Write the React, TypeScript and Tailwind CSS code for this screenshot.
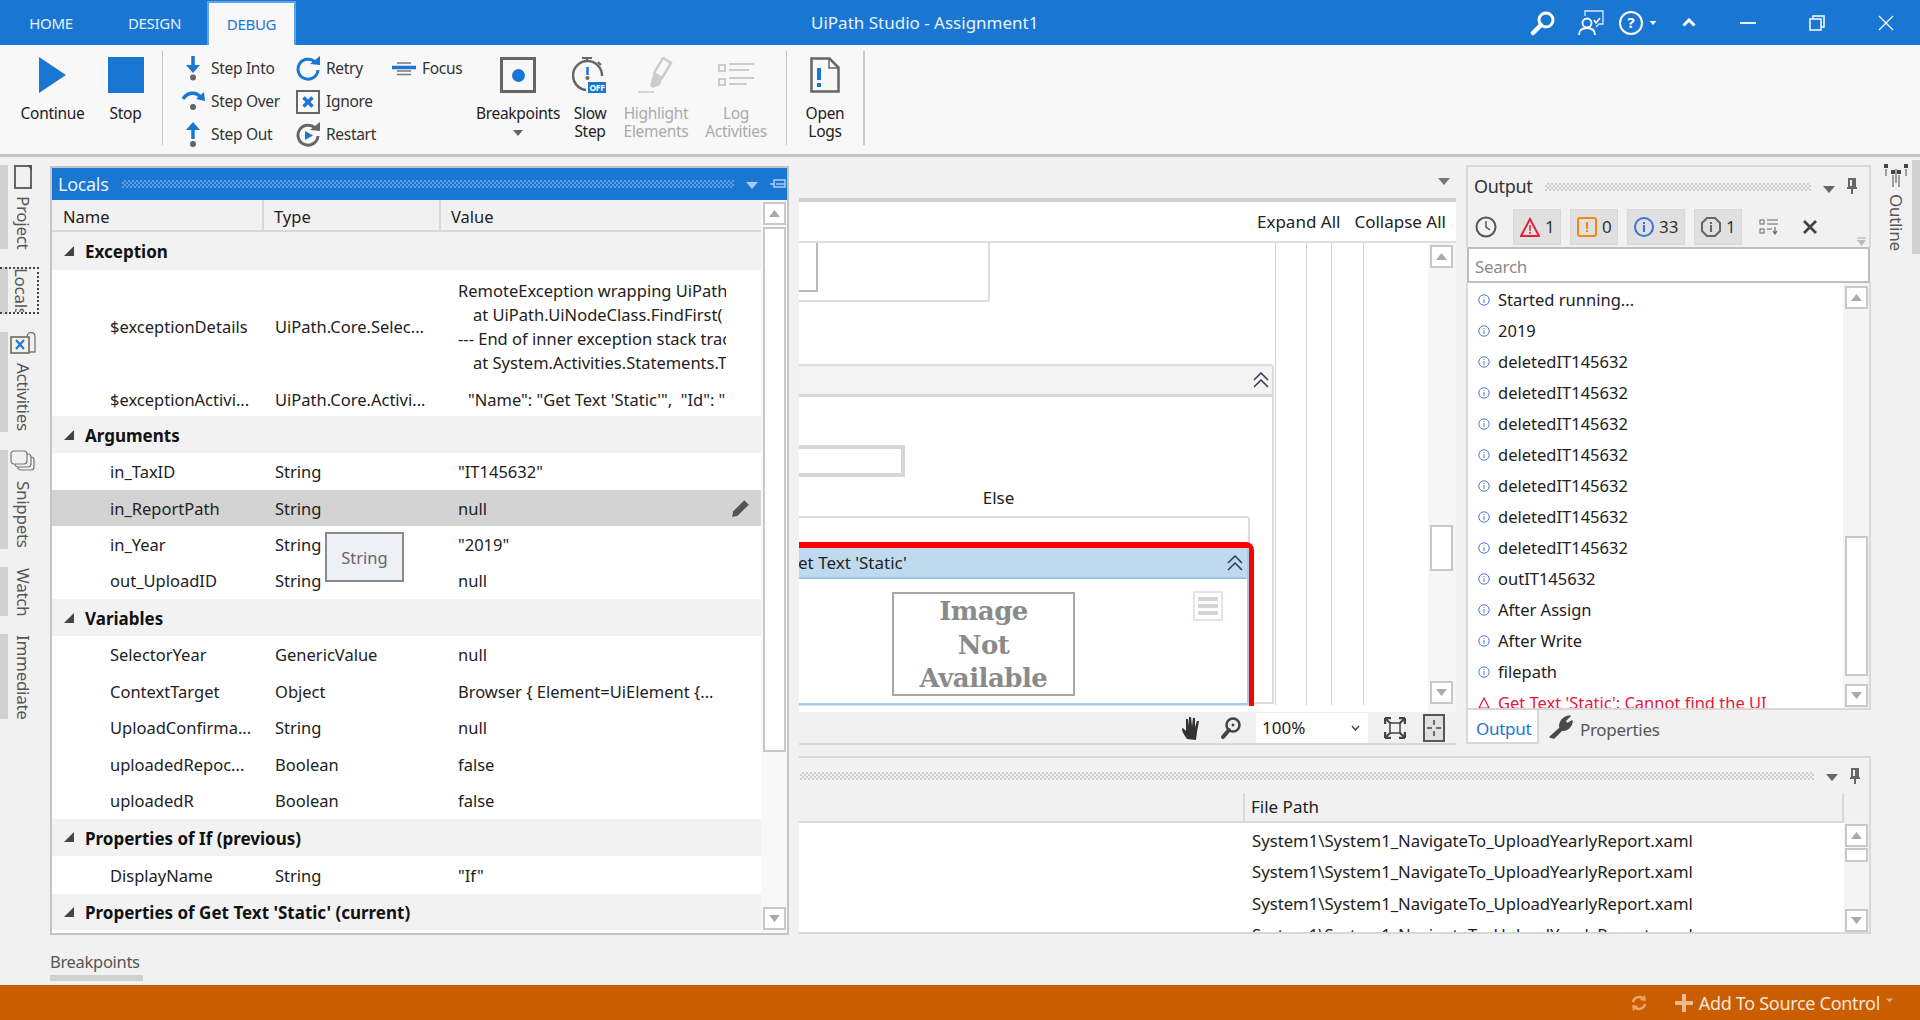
import React from "react";

const Dots = ({ className = "" }: { className?: string }) => (
  <div className={"h-[8px] bg-[repeating-conic-gradient(#cfcfcf_0_25%,transparent_0_50%)] bg-[length:4px_4px] " + className} />
);
const DotsBlue = ({ className = "" }: { className?: string }) => (
  <div className={"h-[8px] bg-[repeating-conic-gradient(#5c9fe0_0_25%,transparent_0_50%)] bg-[length:4px_4px] " + className} />
);
const Caret = ({ c = "#666", w = 12, h = 7 }: { c?: string; w?: number; h?: number }) => (
  <svg width={w} height={h} viewBox="0 0 12 7"><polygon points="0,0 12,0 6,7" fill={c} /></svg>
);
const Pin = ({ c = "#666" }: { c?: string }) => (
  <svg width="12" height="16" viewBox="0 0 12 16"><path d="M3 1h6v8H3z" fill="none" stroke={c} strokeWidth="2" /><path d="M1 10h10M6 10v6M7 2v7" stroke={c} strokeWidth="2" /></svg>
);
const ScrollBtn = ({ up, className = "" }: { up?: boolean; className?: string }) => (
  <div className={"w-[23px] h-[23px] border-2 border-[#c8c8c8] bg-white flex items-center justify-center shrink-0 " + className}>
    <svg width="11" height="7" viewBox="0 0 11 7"><polygon points={up ? "0,7 11,7 5.5,0" : "0,0 11,0 5.5,7"} fill="#aaa" /></svg>
  </div>
);

const StepInto = () => (
  <svg width="24" height="25" viewBox="0 0 24 25"><path d="M12 0v11" stroke="#1976d2" strokeWidth="3.5" /><polygon points="5,9 19,9 12,17" fill="#1976d2" /><circle cx="12" cy="21.5" r="3" fill="#666" /></svg>
);
const StepOver = () => (
  <svg width="24" height="25" viewBox="0 0 24 25"><path d="M2 10C6 3 16 2 20 9" fill="none" stroke="#1976d2" strokeWidth="3.5" /><polygon points="15,10 24,12 23,3" fill="#1976d2" /><circle cx="12" cy="18" r="3" fill="#666" /></svg>
);
const StepOut = () => (
  <svg width="24" height="25" viewBox="0 0 24 25"><path d="M12 6v11" stroke="#1976d2" strokeWidth="3.5" /><polygon points="5,8 19,8 12,0" fill="#1976d2" /><circle cx="12" cy="22" r="3" fill="#666" /></svg>
);
const Retry = () => (
  <svg width="24" height="25" viewBox="0 0 24 25"><path d="M19 6A10 10 0 1 0 22 14" fill="none" stroke="#1976d2" strokeWidth="3" /><polygon points="14,8 24,9 24,0" fill="#1976d2" /></svg>
);
const Ignore = () => (
  <svg width="24" height="24" viewBox="0 0 24 24"><rect x="1" y="1" width="22" height="22" fill="none" stroke="#666" strokeWidth="2" /><path d="M7.5 7.5l9 9M16.500 7.500l-9 9" stroke="#1976d2" strokeWidth="3.5" /></svg>
);
const Restart = () => (
  <svg width="24" height="25" viewBox="0 0 24 25"><path d="M19 6A10 10 0 1 0 22 14" fill="none" stroke="#666" strokeWidth="3" /><polygon points="14,8 24,9 24,0" fill="#666" /><polygon points="9,9 9,18 17,13.500" fill="#1976d2" /></svg>
);
const Focus = () => (
  <svg width="24" height="14" viewBox="0 0 24 14"><path d="M5 1h14M5 12.500h14" stroke="#777" strokeWidth="1.500" /><path d="M0 5.500h24" stroke="#1976d2" strokeWidth="3.500" /><path d="M5 9h14" stroke="#777" strokeWidth="1.500" /></svg>
);

const SmallBtn = ({ icon, label, w }: { icon: React.ReactNode; label: string; w: number }) => (
  <div className="flex items-center h-[33px]" style={{ width: w }}>
    <div className="w-[24px] flex justify-center mr-[6px] shrink-0">{icon}</div>
    <span className="text-[15.5px] text-[#333] whitespace-nowrap">{label}</span>
  </div>
);
const BigBtn = ({ icon, lines, w, muted, extra }: { icon: React.ReactNode; lines: string[]; w: number; muted?: boolean; extra?: React.ReactNode }) => (
  <div className="flex flex-col items-center shrink-0" style={{ width: w }}>
    <div className="h-[36px] flex items-center justify-center">{icon}</div>
    <div className={"mt-[11px] text-[15.5px] leading-[18px] text-center " + (muted ? "text-[#aaa]" : "text-[#222]")}>
      {lines.map((l) => <div key={l} className="whitespace-nowrap">{l}</div>)}
    </div>
    {extra}
  </div>
);

const TitleBar = () => (
  <div className="h-[45px] bg-[#1976d2] flex items-center relative shrink-0 text-white">
    <div className="flex items-end h-[45px] tracking-[-0.300px]">
      <div className="w-[102px] h-[44px] flex items-center justify-center text-[15px] text-[#e6f0fa]">HOME</div>
      <div className="w-[105px] h-[44px] flex items-center justify-center text-[15px] text-[#e6f0fa]">DESIGN</div>
      <div className="w-[89px] h-[44px] flex items-center justify-center text-[15px] text-[#1976d2] bg-[#f8f8f8] border-2 border-b-0 border-[#5fa3e6]">DEBUG</div>
    </div>
    <div className="absolute left-[811px] top-[11px] text-[17px] leading-[24px] text-[#e8f2fb] whitespace-nowrap">UiPath Studio - Assignment1</div>
    <div className="ml-auto flex items-center pr-[26px]">
      <svg width="26" height="26" viewBox="0 0 26 26" className="mr-[22px]"><circle cx="16" cy="10" r="7" fill="none" stroke="#fff" strokeWidth="3" /><path d="M11 15L3 23" stroke="#fff" strokeWidth="4.500" strokeLinecap="round" /></svg>
      <svg width="26" height="26" viewBox="0 0 26 26" className="mr-[15px]"><path d="M7 6V1h18v13h-4l-3 3" fill="none" stroke="#dbe9f8" strokeWidth="1.300" /><path d="M16 10l2 3 4-5" fill="none" stroke="#fff" strokeWidth="1.500" /><circle cx="9" cy="13" r="4.500" fill="none" stroke="#fff" strokeWidth="1.800" /><path d="M1 25c0-5 3-7 8-7s8 2 8 7" fill="none" stroke="#fff" strokeWidth="1.800" /></svg>
      <div className="w-[24px] h-[24px] rounded-full border-2 border-white flex items-center justify-center text-[15px] font-bold mr-[6px]">?</div>
      <Caret c="#fff" w={8} h={4} />
      <svg width="14" height="9" viewBox="0 0 14 9" className="ml-[25px]"><path d="M1.500 7.500L7 2l5.500 5.500" fill="none" stroke="#fff" strokeWidth="3" /></svg>
      <div className="w-[16px] h-[2px] bg-[#e8f2fb] ml-[44px]" />
      <svg width="16" height="16" viewBox="0 0 16 16" className="ml-[53px]"><rect x="1" y="4" width="11" height="11" fill="none" stroke="#fff" strokeWidth="1.500" /><path d="M4 4V1h11v11h-3" fill="none" stroke="#fff" strokeWidth="1.500" /></svg>
      <svg width="16" height="16" viewBox="0 0 16 16" className="ml-[53px]"><path d="M1 1l14 14M15 1L1 15" stroke="#fff" strokeWidth="1.300" /></svg>
    </div>
  </div>
);

const Ribbon = () => (
  <div className="h-[112px] bg-[#f8f8f8] border-b-[3px] border-[#bcc4cc] shrink-0 flex pt-[12px] tracking-[-0.300px]">
    <div className="flex pl-[16px] w-[162px] shrink-0">
      <BigBtn w={73} lines={["Continue"]} icon={<svg width="28" height="36" viewBox="0 0 28 36"><polygon points="0,0 27,18 0,36" fill="#1976d2" /></svg>} />
      <BigBtn w={73} lines={["Stop"]} icon={<div className="w-[36px] h-[36px] bg-[#1976d2]" />} />
    </div>
    <div className="w-[1px] h-[94px] -mt-[6px] bg-[#c8c8c8] shrink-0" />
    <div className="flex flex-col -mt-[5px] pl-[18px] w-[132px] shrink-0">
      <SmallBtn w={110} icon={<StepInto />} label="Step Into" />
      <SmallBtn w={110} icon={<StepOver />} label="Step Over" />
      <SmallBtn w={110} icon={<StepOut />} label="Step Out" />
    </div>
    <div className="flex flex-col -mt-[5px] w-[96px] shrink-0 ml-[1px]">
      <SmallBtn w={96} icon={<Retry />} label="Retry" />
      <SmallBtn w={96} icon={<Ignore />} label="Ignore" />
      <SmallBtn w={96} icon={<Restart />} label="Restart" />
    </div>
    <div className="flex flex-col -mt-[5px] shrink-0 w-[84px]">
      <SmallBtn w={84} icon={<Focus />} label="Focus" />
    </div>
    <BigBtn w={84} lines={["Breakpoints"]} extra={<div className="mt-[8px]"><Caret c="#666" w={10} h={6} /></div>}
      icon={<div className="w-[36px] h-[36px] border-[3px] border-[#666] flex items-center justify-center"><div className="w-[13px] h-[13px] rounded-full bg-[#1976d2]" /></div>} />
    <BigBtn w={60} lines={["Slow", "Step"]}
      icon={<svg width="36" height="36" viewBox="0 0 36 36"><path d="M10 1h10M15 1v4M26 5l3 3" stroke="#666" strokeWidth="2" fill="none" /><path d="M14 33A14.500 14.500 0 1 1 30 19" fill="none" stroke="#666" strokeWidth="2.500" /><path d="M15.500 10v8" stroke="#1976d2" strokeWidth="2.500" /><circle cx="15.500" cy="21" r="2" fill="#666" /><rect x="16" y="25" width="18" height="11" fill="#1976d2" /><text x="25" y="34" fontSize="8.500" fontWeight="700" fill="#fff" textAnchor="middle">OFF</text></svg>} />
    <BigBtn w={72} muted lines={["Highlight", "Elements"]}
      icon={<svg width="36" height="36" viewBox="0 0 36 36"><path d="M0 35h16" stroke="#ccc" strokeWidth="1.500" /><path d="M25 1l8 5-9 15-8-5z" fill="none" stroke="#ccc" strokeWidth="2.500" /><path d="M15 17l9 5-2 6-7 3-3-2z" fill="#ccc" /></svg>} />
    <BigBtn w={88} muted lines={["Log", "Activities"]}
      icon={<svg width="36" height="24" viewBox="0 0 36 24"><rect x="1" y="2" width="6" height="6" fill="none" stroke="#ccc" strokeWidth="2" /><rect x="1" y="16" width="6" height="6" fill="none" stroke="#ccc" strokeWidth="2" /><path d="M11 1h25M11 7h20M11 15h25M11 21h18" stroke="#ccc" strokeWidth="2" /></svg>} />
    <div className="w-[1px] h-[94px] -mt-[6px] bg-[#c8c8c8] shrink-0 ml-[6px]" />
    <BigBtn w={76} lines={["Open", "Logs"]}
      icon={<svg width="30" height="36" viewBox="0 0 30 36"><path d="M1.500 1.500h18l9 9v24h-27z" fill="none" stroke="#666" strokeWidth="2.500" /><path d="M19 2v9h9" fill="none" stroke="#666" strokeWidth="1.500" /><path d="M9 11v12" stroke="#1976d2" strokeWidth="4" /><path d="M9 26v4" stroke="#1976d2" strokeWidth="4" /></svg>} />
    <div className="w-[2px] h-[94px] -mt-[6px] bg-[#c8c8c8] shrink-0" />
  </div>
);

const VTab = ({ h, label, icon, focus }: { h: number; label: string; icon?: React.ReactNode; focus?: boolean }) => (
  <div className="flex relative" style={{ height: h }}>
    <div className="w-[8px] bg-[#d0d0d0]" />
    <div className={"flex flex-col items-center " + (focus ? "border-2 border-dotted border-[#444] border-l-0 -ml-[8px] w-[39px] overflow-hidden pl-[5px]" : "w-[29px]")}>
      {icon && <div className="h-[30px] flex items-start justify-center">{icon}</div>}
      <span className={"[writing-mode:vertical-rl] text-[17px] leading-[24px] text-[#555] whitespace-nowrap tracking-[-0.300px] " + (focus ? "-mt-[1px]" : "mt-[1px]")}>{label}</span>
    </div>
  </div>
);

const LeftRail = () => (
  <div className="w-[50px] shrink-0 pt-[8px] flex flex-col gap-[18px]">
    <VTab h={84} label="Project" icon={<svg width="18" height="24" viewBox="0 0 18 24"><path d="M1 1h16v22H1z" fill="none" stroke="#666" strokeWidth="2" /><path d="M13 0h5v6z" fill="#555" /></svg>} />
    <VTab h={47} focus label="Locals" />
    <VTab h={100} label="Activities" icon={<svg width="26" height="22" viewBox="0 0 26 22"><path d="M1 5h18v16H1z" fill="none" stroke="#6b5f4b" strokeWidth="1.500" /><path d="M17 5c0-6 8-6 8 0v15h-6" fill="none" stroke="#777" strokeWidth="1.300" /><path d="M6 8l8 9M14 8l-8 9" stroke="#1976d2" strokeWidth="2" /></svg>} />
    <VTab h={99} label="Snippets" icon={<svg width="26" height="22" viewBox="0 0 26 22"><rect x="8" y="7" width="16" height="13" rx="3" fill="#f0f0f0" stroke="#777" strokeWidth="1.200" /><rect x="5" y="4" width="16" height="13" rx="3" fill="#f0f0f0" stroke="#777" strokeWidth="1.200" /><rect x="1" y="1" width="16" height="13" rx="3" fill="#f0f0f0" stroke="#777" strokeWidth="1.200" /></svg>} />
    <VTab h={49} label="Watch" />
    <VTab h={85} label="Immediate" />
  </div>
);

const Chevrons = ({ c = "#2f3b4a" }: { c?: string }) => (
  <svg width="16" height="16" viewBox="0 0 16 16"><path d="M1 8l7-7 7 7M1 15l7-7 7 7" fill="none" stroke={c} strokeWidth="1.500" /></svg>
);

const Designer = () => (
  <div className="w-[1406px] shrink-0 flex flex-col pt-[9px]">
    <div className="h-[32px] flex items-center justify-end pr-[6px] pb-[1px]"><Caret c="#777" w={12} h={9} /></div>
    <div className="h-[4px] bg-[#cfcfcf]" />
    <div className="h-[41px] bg-white border-b-2 border-[#dedede] flex items-center justify-end pr-[10px] gap-[14px] text-[17px] text-[#222]">
      <span>Expand All</span><span>Collapse All</span>
    </div>
    <div className="h-[469px] bg-white relative overflow-hidden">
      <div className="absolute left-[1225px] top-0 h-[462px] w-[1px] bg-[#d4d4d4]" />
      <div className="absolute left-[1256px] top-0 h-[462px] w-[1px] bg-[#d4d4d4]" />
      <div className="absolute left-[1281px] top-0 h-[462px] w-[1px] bg-[#d4d4d4]" />
      <div className="absolute left-[1313px] top-0 h-[462px] w-[1px] bg-[#d4d4d4]" />
      <div className="absolute left-[700px] -top-[10px] w-[240px] h-[69px] border-2 border-[#dcdcdc] rounded-[2px]" />
      <div className="absolute left-[700px] -top-[10px] w-[68px] h-[59px] border-2 border-[#b8b8b8]" />
      <div className="absolute left-[700px] top-[121px] w-[524px] h-[340px] border-2 border-[#dcdcdc] rounded-t-[3px]">
        <div className="h-[31px] bg-[#f3f3f3] border-b-[3px] border-[#d8d8d8] flex items-center justify-end pr-[3px]"><Chevrons /></div>
      </div>
      <div className="absolute left-[700px] top-[202px] w-[155px] h-[32px] border-[4px] border-[#d6d6d6]" />
      <div className="absolute left-[900px] top-[244px] text-[17px] leading-[22px] text-[#222] w-[97px] text-center">Else</div>
      <div className="absolute left-[700px] top-[273px] w-[500px] h-[190px] border-2 border-[#dcdcdc] rounded-tr-[3px]" />
      <div className="absolute left-[700px] top-[299px] w-[504px] h-[164px] border-t-[6px] border-r-[5px] border-[#ff0000] rounded-tr-[8px]">
        <div className="h-[157px] border-r-2 border-b-2 border-[#a6cde8] rounded-br-[3px] bg-white">
          <div className="h-[31px] bg-[#bfdaee] border-b-2 border-[#9cc6e6] flex items-center pl-[48px] pr-[4px] text-[17px] text-[#222]">
            <span>et Text 'Static'</span><span className="ml-auto"><Chevrons /></span>
          </div>
          <div className="relative">
            <div className="absolute left-[142px] top-[13px] w-[183px] h-[104px] border-2 border-[#a8a8a8] flex items-center justify-center text-center pt-[3px] font-['DejaVu_Serif',serif] font-bold text-[#8a8a8a] text-[26px] leading-[33.500px] tracking-[-0.500px]">
              <div>Image<br />Not<br />Available</div>
            </div>
            <div className="absolute left-[443px] top-[12px] w-[30px] h-[30px] border-2 border-[#e0e4ee] flex flex-col items-center justify-center gap-[3px]">
              <div className="w-[20px] h-[4px] bg-[#d4d4d4]" /><div className="w-[20px] h-[4px] bg-[#d4d4d4]" /><div className="w-[20px] h-[4px] bg-[#d4d4d4]" />
            </div>
          </div>
        </div>
      </div>
      <div className="absolute right-0 top-0 bottom-0 w-[28px] bg-[#f6f6f6] pt-[2px] pb-[8px] pl-[2px] flex flex-col">
        <ScrollBtn up />
        <div className="w-[23px] h-[46px] mt-[257px] border-2 border-[#c8c8c8] bg-white" />
        <ScrollBtn className="mt-auto" />
      </div>
    </div>
    <div className="h-[33px] border-b-2 border-[#d8d8d8] bg-[#f1f1f1] flex items-center justify-end">
      <svg width="22" height="24" viewBox="0 0 22 24" className="mr-[17px]"><path d="M6 23c-2-3-5-7-5-10l1-1 3 3V3l2 0 1 7V1h2l1 9 1-8h2l0 9 2-6h2l-2 11-1 8z" fill="#333" /></svg>
      <svg width="22" height="24" viewBox="0 0 22 24" className="mr-[14px]"><circle cx="13" cy="9" r="6.500" fill="none" stroke="#444" strokeWidth="2.500" /><path d="M9 14l-6 7" stroke="#444" strokeWidth="4" strokeLinecap="round" /><circle cx="13" cy="9" r="1.500" fill="#444" /></svg>
      <div className="w-[112px] h-[30px] bg-white flex items-center pl-[6px] text-[17px] text-[#222]">
        100%
        <svg width="9" height="6" viewBox="0 0 9 6" className="ml-auto mr-[8px]"><path d="M1 1l3.500 4L8 1" fill="none" stroke="#444" strokeWidth="1.500" /></svg>
      </div>
      <svg width="22" height="22" viewBox="0 0 22 22" className="ml-[16px]"><path d="M2 2l18 18M20 2L2 20" stroke="#444" strokeWidth="2" /><path d="M1 1h6M1 1v6M21 1h-6M21 1v6M1 21h6M1 21v-6M21 21h-6M21 21v-6" stroke="#444" strokeWidth="2.500" /><rect x="6" y="6" width="10" height="10" fill="#f1f1f1" stroke="#444" strokeWidth="1.500" /></svg>
      <svg width="22" height="28" viewBox="0 0 22 28" className="ml-[17px] mr-[11px]"><rect x="1" y="1" width="20" height="26" fill="#e0e0e0" stroke="#555" strokeWidth="2" /><path d="M11 6v5M11 17v5M4 14h5M13 14h5" stroke="#444" strokeWidth="1.500" /></svg>
    </div>
  </div>
);

const outRows = ["Started running...", "2019", "deletedIT145632", "deletedIT145632", "deletedIT145632", "deletedIT145632", "deletedIT145632", "deletedIT145632", "deletedIT145632", "outIT145632", "After Assign", "After Write", "filepath"];

const Counter = ({ icon, n, w }: { icon: React.ReactNode; n: string; w: number }) => (
  <div className="h-[36px] bg-[#e0e0e0] border border-[#d8d8d8] flex items-center pl-[6px] gap-[5px] text-[17px] text-[#333] shrink-0" style={{ width: w }}>
    {icon}{n}
  </div>
);

const InfoSmall = () => (
  <svg width="12" height="12" viewBox="0 0 12 12" className="shrink-0"><circle cx="6" cy="6" r="5.200" fill="none" stroke="#4a78d8" strokeWidth="1" /><path d="M6 5v4M6 3v1" stroke="#4a78d8" strokeWidth="1" /></svg>
);

const Output = () => (
  <div className="w-[405px] shrink-0 ml-[10px] mt-[8px] flex flex-col">
    <div className="border-2 border-[#d8d8d8] border-b-0 bg-[#f1f1f1] h-[82px] relative">
      <div className="flex items-center h-[42px] pl-[6px] pr-[11px]">
        <span className="text-[18px] text-[#333] -mt-[4px] tracking-[-0.300px]">Output</span>
        <Dots className="w-[270px] ml-[12px] -mt-[3px]" />
        <div className="ml-[12px] mt-[2px]"><Caret c="#666" /></div>
        <div className="ml-[11px] -mt-[4px]"><Pin /></div>
      </div>
      <div className="flex items-center">
        <svg width="22" height="22" viewBox="0 0 22 22" className="ml-[7px] mr-[16px]"><circle cx="11" cy="11" r="9.500" fill="none" stroke="#555" strokeWidth="2" /><path d="M11 5v6l4 3" fill="none" stroke="#555" strokeWidth="1.500" /></svg>
        <Counter w={48} n="1" icon={<svg width="20" height="20" viewBox="0 0 20 20"><path d="M10 2L1 19h18z" fill="none" stroke="#e0203c" strokeWidth="2" /><path d="M10 8v6M10 15v2" stroke="#e0203c" strokeWidth="1.500" /></svg>} />
        <div className="w-[9px]" />
        <Counter w={48} n="0" icon={<svg width="20" height="20" viewBox="0 0 20 20"><rect x="1" y="1" width="18" height="18" rx="2" fill="none" stroke="#f5880a" strokeWidth="2" /><path d="M10 5v7M10 13v2" stroke="#f5880a" strokeWidth="2" /></svg>} />
        <div className="w-[9px]" />
        <Counter w={58} n="33" icon={<svg width="20" height="20" viewBox="0 0 20 20"><circle cx="10" cy="10" r="9" fill="none" stroke="#3c6fe0" strokeWidth="2" /><path d="M10 8v7M10 5v2" stroke="#3c6fe0" strokeWidth="2" /></svg>} />
        <div className="w-[9px]" />
        <Counter w={48} n="1" icon={<svg width="20" height="20" viewBox="0 0 20 20"><path d="M6 1h8l5 5v8l-5 5H6l-5-5V6z" fill="none" stroke="#666" strokeWidth="2" /><path d="M10 8v7M10 5v2" stroke="#666" strokeWidth="2" /></svg>} />
        <svg width="20" height="16" viewBox="0 0 20 16" className="ml-[17px]"><rect x="1" y="1" width="4" height="4" fill="none" stroke="#666" /><rect x="1" y="10" width="4" height="4" fill="none" stroke="#666" /><path d="M8 1h11M8 5h11M8 10h5M16 8v7M14 12l2 3 2-3" fill="none" stroke="#666" strokeWidth="1.200" /></svg>
        <svg width="14" height="14" viewBox="0 0 14 14" className="ml-[24px]"><path d="M1 1l12 12M13 1L1 13" stroke="#444" strokeWidth="2.800" /></svg>
      </div>
      <div className="absolute right-[3px] bottom-[1px]"><svg width="9" height="9" viewBox="0 0 9 9"><path d="M0 1h9" stroke="#aaa" /><polygon points="0,3 9,3 4.500,9" fill="#bbb" /></svg></div>
    </div>
    <div className="h-[36px] bg-white border-2 border-[#bdbdbd] flex items-center pl-[6px] pt-[4px] text-[17px] text-[#8a8a8a] mx-[1px] tracking-[-0.300px]">Search</div>
    <div className="h-[429px] relative bg-white border-l-2 border-r-2 border-b-2 border-[#d8d8d8] overflow-hidden pt-[2px]">
      {outRows.map((t, i) => (
        <div key={i} className="h-[31px] flex items-center pl-[10px] gap-[8px] text-[16.500px] text-[#222]"><InfoSmall />{t}</div>
      ))}
      <div className="h-[31px] flex items-center pl-[10px] gap-[8px] text-[16.500px] text-[#e8153c]">
        <svg width="12" height="12" viewBox="0 0 12 12" className="shrink-0"><path d="M6 1L1 11h10z" fill="none" stroke="#e8153c" strokeWidth="1.200" /></svg>
        Get Text 'Static': Cannot find the UI
      </div>
      <div className="absolute right-0 top-0 bottom-0 w-[26px] bg-[#f4f4f4] flex flex-col items-center pt-[3px] pb-[1px]">
        <ScrollBtn up />
        <div className="w-[23px] h-[140px] mt-[227px] border-2 border-[#c8c8c8] bg-white" />
        <ScrollBtn className="mt-auto" />
      </div>
    </div>
    <div className="h-[35px] flex tracking-[-0.300px]">
      <div className="w-[73px] h-[34px] bg-white border-2 border-t-0 border-[#d8d8d8] flex items-center pl-[8px] pt-[6px] text-[17px] text-[#1976d2]">Output</div>
      <svg width="25" height="25" viewBox="0 0 25 25" className="ml-[9px] mt-[4px]"><path d="M2 23l10-9c-1-5 2-11 10-12l-5 5 2 3 5-3c0 6-6 10-10 9l-8 8z" fill="#4a4a4a" stroke="#4a4a4a" strokeWidth="1.500" strokeLinejoin="round" /></svg>
      <span className="ml-[7px] mt-[7px] text-[17px] text-[#555]">Properties</span>
    </div>
  </div>
);

const BottomPanel = () => (
  <div className="h-[178px] mt-[11px] border-2 border-[#d8d8d8] bg-white relative flex flex-col shrink-0">
    <div className="h-[35px] bg-[#f1f1f1] flex items-center pl-[748px]">
      <Dots className="w-[1014px]" />
      <div className="ml-[12px] mt-[4px]"><Caret c="#666" /></div>
      <div className="ml-[11px]"><Pin /></div>
    </div>
    <div className="flex flex-1 overflow-hidden">
      <div className="flex-1 flex flex-col overflow-hidden">
        <div className="h-[30px] bg-[#f1f1f1] border-b-2 border-[#d8d8d8] border-r-2 flex shrink-0">
          <div className="w-[1193px] shrink-0 border-r-2 border-[#d8d8d8]" />
          <div className="pl-[6px] text-[17px] leading-[28px] text-[#222]">File Path</div>
        </div>
        <div className="pl-[1200px] pt-[2px] text-[16.700px] leading-[31.300px] text-[#222] whitespace-nowrap">
          <div>System1\System1_NavigateTo_UploadYearlyReport.xaml</div>
          <div>System1\System1_NavigateTo_UploadYearlyReport.xaml</div>
          <div>System1\System1_NavigateTo_UploadYearlyReport.xaml</div>
          <div>System1\System1_NavigateTo_UploadYearlyReport.xaml</div>
        </div>
      </div>
      <div className="w-[25px] shrink-0 bg-[#f4f4f4] flex flex-col items-center">
        <div className="h-[30px] w-full bg-[#f1f1f1] shrink-0" />
        <div className="w-[23px] flex flex-col h-[108px] mt-[1px]">
          <ScrollBtn up />
          <div className="w-[23px] h-[14px] mt-[1px] border-2 border-[#c8c8c8] bg-white" />
          <ScrollBtn className="mt-auto" />
        </div>
      </div>
    </div>
  </div>
);

const Row = ({ n, t, v, h = 36, sel, lines }: { n: string; t: string; v?: string; h?: number; sel?: boolean; lines?: React.ReactNode }) => (
  <div className={"flex items-center text-[16.500px] text-[#222] relative pt-[2px] shrink-0 " + (sel ? "bg-[#d3d3d3]" : "bg-white")} style={{ height: h }}>
    <div className="w-[212px] pl-[58px] whitespace-nowrap overflow-hidden shrink-0">{n}</div>
    <div className="w-[177px] pl-[11px] whitespace-nowrap overflow-hidden shrink-0">{t}</div>
    <div className="w-[285px] pl-[17px] whitespace-pre overflow-hidden shrink-0">{lines ?? v}</div>
    {sel && (
      <svg width="20" height="20" viewBox="0 0 18 18" className="absolute right-[10px] top-[8px]"><path d="M1 17l1-5L12 2l4 4L6 16z" fill="#555" /></svg>
    )}
  </div>
);
const Group = ({ t, h = 37 }: { t: string; h?: number }) => (
  <div className="bg-[#f2f2f2] flex items-center pl-[12px] pt-[2px] text-[17px] font-bold text-[#111] shrink-0" style={{ height: h }}>
    <svg width="10" height="10" viewBox="0 0 10 10" className="mr-[11px] -mt-[2px]"><polygon points="10,0 10,10 0,10" fill="#444" /></svg>
    {t}
  </div>
);

const Locals = () => (
  <div className="absolute left-[50px] top-[9px] w-[739px] h-[769px] bg-[#f0f0f0] border-2 border-[#c4c4c4] flex flex-col overflow-hidden">
    <div className="h-[32px] bg-[#1976d2] flex items-center pl-[6px] shrink-0">
      <span className="text-[18px] text-[#e8f2fb] tracking-[-0.300px]">Locals</span>
      <DotsBlue className="w-[612px] ml-[13px]" />
      <div className="ml-[12px] mt-[2px]"><Caret c="#a9cdf0" /></div>
      <svg width="16" height="12" viewBox="0 0 16 12" className="ml-[12px]"><path d="M0 6h4M4 2h11v7H4zM6 6h9" fill="none" stroke="#a9cdf0" strokeWidth="1.500" /></svg>
    </div>
    <div className="flex flex-1 overflow-hidden">
      <div className="w-[709px] shrink-0 bg-white flex flex-col overflow-hidden">
        <div className="h-[32px] bg-[#f1f1f1] border-b-2 border-[#d8d8d8] flex text-[16.500px] text-[#222] shrink-0 leading-[33px]">
          <div className="w-[212px] pl-[11px] border-r-2 border-[#d8d8d8]">Name</div>
          <div className="w-[177px] pl-[10px] border-r-2 border-[#d8d8d8]">Type</div>
          <div className="pl-[10px]">Value</div>
        </div>
        <Group t="Exception" h={38} />
        <Row n="$exceptionDetails" t="UiPath.Core.Selec..." h={112} lines={
          <div className="leading-[24px]">
            <div>RemoteException wrapping UiPath</div>
            <div className="pl-[15px]">at UiPath.UiNodeClass.FindFirst(</div>
            <div>--- End of inner exception stack trace</div>
            <div className="pl-[15px]">at System.Activities.Statements.T</div>
          </div>} />
        <Row n="$exceptionActivi..." t="UiPath.Core.Activi..." h={34} lines={<div className="pl-[10px]">"Name": "Get Text 'Static'",  "Id": "</div>} />
        <Group t="Arguments" />
        <Row n="in_TaxID" t="String" v={'"IT145632"'} h={37} />
        <Row n="in_ReportPath" t="String" v="null" sel />
        <Row n="in_Year" t="String" v={'"2019"'} />
        <Row n="out_UploadID" t="String" v="null" h={37} />
        <Group t="Variables" />
        <Row n="SelectorYear" t="GenericValue" v="null" h={36.6} />
        <Row n="ContextTarget" t="Object" v="Browser { Element=UiElement {..." h={36.6} />
        <Row n="UploadConfirma..." t="String" v="null" h={36.6} />
        <Row n="uploadedRepoc..." t="Boolean" v="false" h={36.6} />
        <Row n="uploadedR" t="Boolean" v="false" h={36.6} />
        <Group t="Properties of If (previous)" />
        <Row n="DisplayName" t="String" v={'"If"'} h={38} />
        <Group t="Properties of Get Text 'Static' (current)" h={36} />
      </div>
      <div className="flex-1 flex flex-col items-center pt-[2px] pb-[3px] bg-[#f8f8f8]">
        <ScrollBtn up />
        <div className="w-[23px] h-[525px] mt-[2px] border-2 border-[#c8c8c8] bg-white" />
        <ScrollBtn className="mt-auto" />
      </div>
    </div>
    <div className="absolute left-[273px] top-[364px] w-[79px] h-[50px] bg-[#eef0f8] border-2 border-[#8a8a8a] flex items-center justify-center pt-[2px] text-[16.500px] text-[#666]">String</div>
  </div>
);

const RightRail = () => (
  <div className="flex-1 flex relative">
    <div className="w-[38px] pt-[7px] flex flex-col items-center pl-[11px]">
      <svg width="24" height="24" viewBox="0 0 24 24"><rect x="0" y="0" width="4" height="4" fill="#444" /><rect x="20" y="0" width="4" height="4" fill="#444" /><rect x="7" y="6" width="4" height="4" fill="#444" /><rect x="13" y="6" width="4" height="4" fill="#444" /><path d="M2 5v7M9 11v12M15 11v12M22 5v7M12 5v14" stroke="#666" strokeWidth="1.200" /></svg>
      <span className="[writing-mode:vertical-rl] text-[17px] leading-[24px] text-[#555] mt-[6px] tracking-[-0.300px]">Outline</span>
    </div>
    <div className="ml-auto w-[8px] h-[94px] mt-[3px] bg-[#d0d0d0]" />
  </div>
);

const StatusBar = () => (
  <div className="h-[35px] bg-[#ca5d00] shrink-0 flex items-center justify-end pr-[27px] pt-[1px] text-[#f8e6d6] text-[18px] tracking-[-0.300px]">
    <svg width="18" height="18" viewBox="0 0 18 18" className="mr-[27px]"><path d="M3 8a6 6 0 0 1 11-2M15 10a6 6 0 0 1-11 2" fill="none" stroke="#eda46b" strokeWidth="2.500" /><polygon points="15,1 16,7 10,6" fill="#eda46b" /><polygon points="3,17 2,11 8,12" fill="#eda46b" /></svg>
    <svg width="18" height="18" viewBox="0 0 18 18" className="mr-[6px]"><path d="M9 0v18M0 9h18" stroke="#f0b890" strokeWidth="4" /></svg>
    <span>Add To Source Control</span>
    <div className="ml-[6px] -mt-[6px]"><Caret c="#eda46b" w={7} h={5} /></div>
  </div>
);

export default function App() {
  return (
    <div className="w-[1920px] h-[1020px] overflow-hidden flex flex-col bg-[#f1f1f1] font-['Noto_Sans',sans-serif]">
      <TitleBar />
      <Ribbon />
      <div className="h-[828px] shrink-0 flex relative">
        <LeftRail />
        <div className="w-[1821px] shrink-0 flex flex-col">
          <div className="flex h-[588px] shrink-0">
            <Designer />
            <Output />
          </div>
          <BottomPanel />
          <div className="mt-[16px]">
            <div className="w-[93px] text-[16.500px] leading-[24px] text-[#555] border-b-[6px] border-[#d0d0d0] pb-[1px] whitespace-nowrap tracking-[-0.300px]">Breakpoints</div>
          </div>
        </div>
        <RightRail />
        <Locals />
        <div className="absolute left-[789px] top-[9px] w-[10px] h-[769px] bg-[#f1f1f1]" />
      </div>
      <StatusBar />
    </div>
  );
}
